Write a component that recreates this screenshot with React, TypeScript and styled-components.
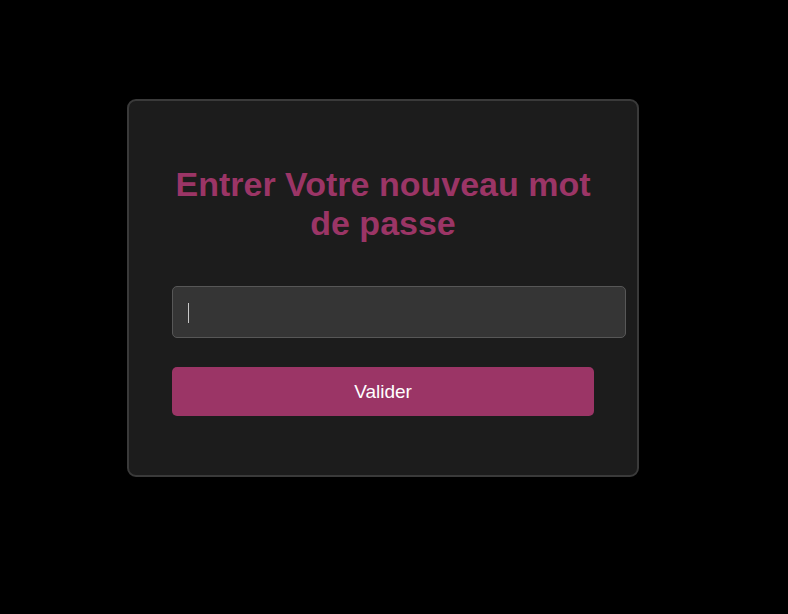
import React from "react";
import styled, { createGlobalStyle } from "styled-components";

const GlobalStyle = createGlobalStyle`
    html, body {
        margin: 0;
        padding: 0;
        background: #000000;
        font-family: "Liberation Sans", Arial, sans-serif;
    }
`;

const StyledPage = styled.div`
    min-height: 614px;
    padding: 99px 0 0 127px;
    box-sizing: border-box;
`;

const StyledCard = styled.form`
    width: 422px;
    padding: 64px 43px 59px;
    background: #1c1c1c;
    border: 2px solid #3a3a3a;
    border-radius: 9px;
    display: flex;
    flex-direction: column;
    align-items: flex-start;
`;

const StyledTitle = styled.h2`
    width: 100%;
    margin: 0 0 43px;
    color: #9b3566;
    font-size: 34px;
    font-weight: bold;
    line-height: 39px;
    text-align: center;
`;

const StyledField = styled.div`
    position: relative;
    width: 100%;
    margin: 0 0 29px;

    .caret {
        position: absolute;
        top: 17px;
        left: 16px;
        width: 1px;
        height: 20px;
        background: #c8c8c8;
        pointer-events: none;
    }
`;

const StyledInput = styled.input`
    width: 100%;
    height: 50px;
    margin: 0;
    padding: 0 15px;
    box-sizing: content-box;
    background: #353535;
    border: 1px solid #575757;
    border-radius: 5px;
    color: #dddddd;
    caret-color: transparent;
    font-family: "Liberation Sans", Arial, sans-serif;
    font-size: 22px;
    outline: none;
    display: block;
`;

const StyledButton = styled.button`
    width: 100%;
    height: 49px;
    background: #9b3566;
    border: none;
    border-radius: 5px;
    color: #ffffff;
    font-family: "Liberation Sans", Arial, sans-serif;
    font-size: 19px;
    cursor: pointer;
`;

function App() {
    return (
        <>
            <GlobalStyle />
            <StyledPage>
                <StyledCard onSubmit={(e) => e.preventDefault()}>
                    <StyledTitle>Entrer Votre nouveau mot de passe</StyledTitle>
                    <StyledField>
                        <StyledInput type="password" />
                        <span className="caret"></span>
                    </StyledField>
                    <StyledButton type="submit">Valider</StyledButton>
                </StyledCard>
            </StyledPage>
        </>
    );
}

export default App;
